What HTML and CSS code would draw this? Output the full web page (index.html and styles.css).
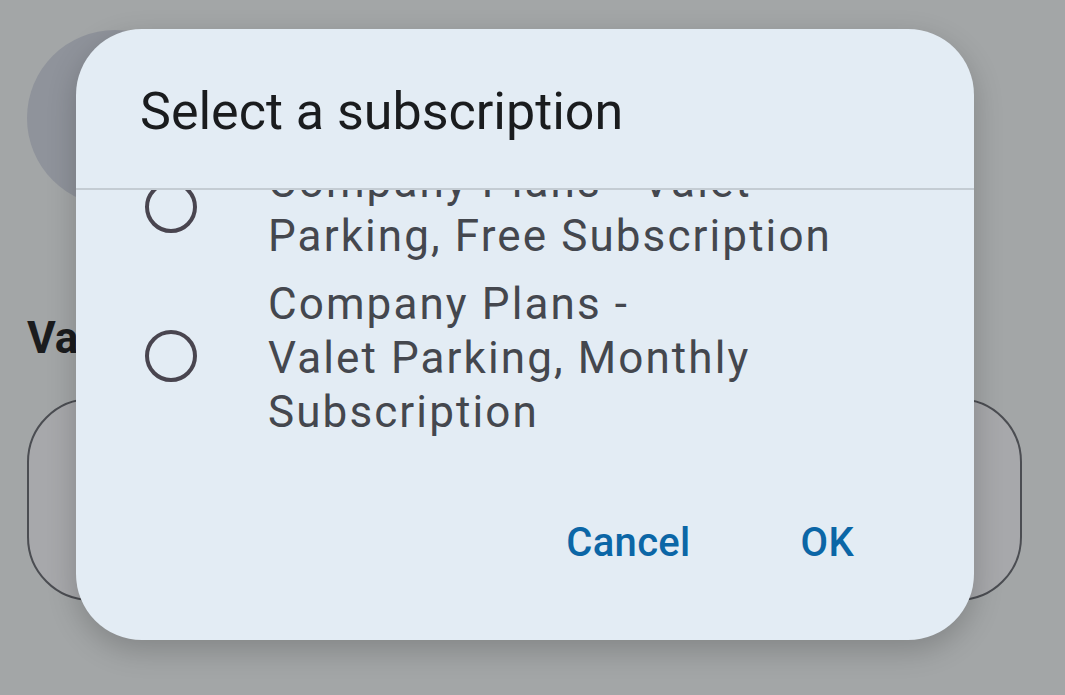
FILE: index.html
```html
<!DOCTYPE html>
<html>
<head>
<meta charset="utf-8">
<link rel="stylesheet" href="styles.css">
</head>
<body>
<div class="page">
  <div class="avatar"></div>
  <div class="label">Valet Parking</div>
  <div class="field"></div>
</div>
<div class="dialog">
  <div class="title">Select a subscription</div>
  <div class="divider"></div>
  <div class="list">
    <div class="items">
      <div class="item">
        <span class="radio"></span>
        <span class="text">Company Plans - Valet<br>Parking, Free Subscription</span>
      </div>
      <div class="item">
        <span class="radio"></span>
        <span class="text">Company Plans -<br>Valet Parking, Monthly<br>Subscription</span>
      </div>
    </div>
  </div>
  <div class="actions">
    <span class="btn">Cancel</span>
    <span class="btn">OK</span>
  </div>
</div>
</body>
</html>
```

FILE: styles.css
```css
html, body {
  margin: 0;
  padding: 0;
}
body {
  width: 1065px;
  height: 695px;
  overflow: hidden;
  background: #a3a6a7;
  font-family: Roboto, "Noto Sans", sans-serif;
  position: relative;
}
.page {
  padding: 30px 43px 0 27px;
  display: flex;
  flex-direction: column;
}
.avatar {
  width: 176px;
  height: 176px;
  border-radius: 50%;
  background: #8f939b;
}
.label {
  margin-top: 105px;
  font-size: 44px;
  line-height: 54px;
  font-weight: 700;
  color: #1b1c1e;
}
.field {
  margin-top: 33px;
  height: 199px;
  border: 2px solid #4b4d52;
  border-radius: 64px;
  background: #a7a8ab;
}
.dialog {
  position: absolute;
  left: 76px;
  top: 29px;
  width: 898px;
  height: 611px;
  border-radius: 66px;
  background: #e3ecf4;
  box-shadow: 0 10px 30px rgba(0, 0, 0, 0.2);
  display: flex;
  flex-direction: column;
  overflow: hidden;
}
.title {
  padding: 52px 0 45px 64px;
  font-size: 52px;
  line-height: 62px;
  color: #1a1c1e;
}
.divider {
  height: 2px;
  background: #c4ccd3;
}
.list {
  height: 280px;
  overflow: hidden;
}
.items {
  margin-top: -42px;
  display: flex;
  flex-direction: column;
}
.item {
  display: flex;
  align-items: center;
  padding: 7px 0 7px 69px;
  gap: 71px;
}
.radio {
  width: 52px;
  height: 52px;
  box-sizing: border-box;
  border: 4px solid #49454f;
  border-radius: 50%;
  flex: none;
  margin-bottom: 4px;
}
.text {
  font-size: 44px;
  line-height: 54px;
  color: #44474e;
  white-space: nowrap;
  letter-spacing: 2.1px;
}
.actions {
  display: flex;
  justify-content: flex-end;
  gap: 54px;
  padding: 49px 92px 0 0;
}
.btn {
  padding: 0 28px;
  font-size: 40px;
  line-height: 48px;
  font-weight: 500;
  color: #0b66a6;
  letter-spacing: 0.3px;
}
```
